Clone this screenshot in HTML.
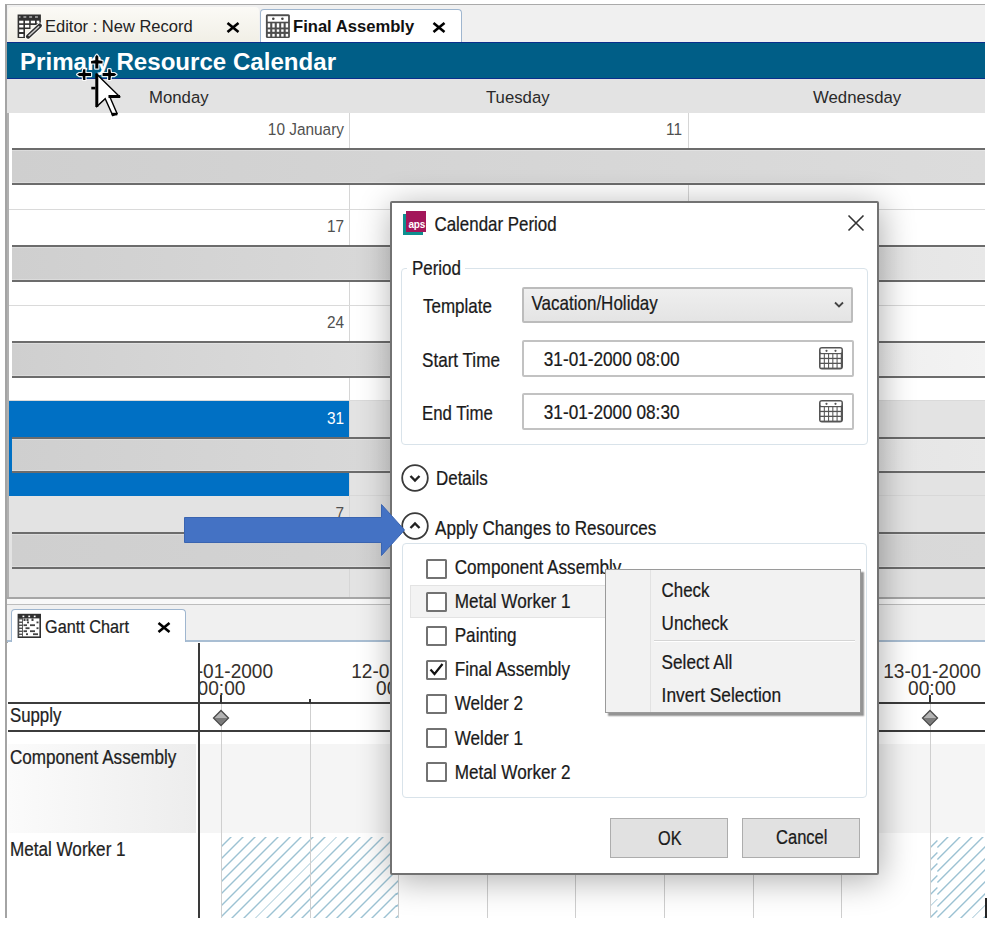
<!DOCTYPE html>
<html><head><meta charset="utf-8">
<style>
html,body{margin:0;padding:0;background:#fff;width:988px;height:926px;overflow:hidden;position:relative;font-family:"Liberation Sans",sans-serif;color:#1e1e1e}
div,span,svg{position:absolute;box-sizing:border-box}
.t{white-space:nowrap;line-height:1}
.sy{transform-origin:0 84.67%;transform:scaleY(1.15);-webkit-text-stroke:0.2px currentColor}
</style></head><body>
<div style="left:5px;top:4px;width:980px;height:914px;border-left:3px solid #a4a4a4;border-top:1px solid #aaa;background:#fff"></div>
<div style="left:7px;top:5px;width:978px;height:37px;background:#f0f0f0"></div>
<div style="left:8px;top:7px;width:251px;height:35px;background:linear-gradient(#fbfaf6,#f1efe6);border-radius:4px 4px 0 0"></div>
<div style="left:260px;top:9px;width:202px;height:34px;background:#fff;border:1px solid #9fb6cf;border-bottom:none;border-radius:4px 4px 0 0"></div>
<svg style="left:14px;top:10px" width="30" height="30" viewBox="14 10 30 30">
 <path d="M17.6 14.4H40.9V23.3L39 24.9H30.5V29.1H25V37.9H17.6Z" fill="#303030"/>
 <g fill="#a8a8a8"><rect x="18.9" y="16.2" width="1.6" height="1.6"/><rect x="23.4" y="16.2" width="2.9" height="1.6"/><rect x="29.2" y="16.2" width="2.9" height="1.6"/><rect x="35" y="16.2" width="2.9" height="1.6"/></g>
 <g fill="#fff"><rect x="19.2" y="20.7" width="4.2" height="2.6"/><rect x="25" y="20.7" width="4.2" height="2.6"/><rect x="30.8" y="20.7" width="4.2" height="2.6"/><rect x="36.7" y="20.7" width="2.6" height="2.6"/>
 <rect x="19.2" y="24.9" width="4.2" height="2.6"/><rect x="25" y="24.9" width="4.2" height="2.6"/><rect x="19.2" y="29.4" width="4.2" height="2.6"/><rect x="19.2" y="34" width="4.2" height="2.9"/></g>
 <path d="M28 36.6L39.8 25.6" stroke="#fff" stroke-width="6" stroke-linecap="round"/>
 <path d="M28 36.6L39.8 25.6" stroke="#303030" stroke-width="4.2" stroke-linecap="round"/>
 <path d="M28.6 36L39.2 26.2" stroke="#cfcfcf" stroke-width="1.5"/>
</svg>
<span class="t" style="left:45px;top:18px;font-size:16.5px;color:#222">Editor : New Record</span>
<svg style="left:226px;top:22px" width="14" height="11" viewBox="0 0 14 11"><path d="M1.5 1l11 9M12.5 1l-11 9" stroke="#000" stroke-width="2.6"/></svg>
<svg style="left:262px;top:10px" width="30" height="30" viewBox="262 10 30 30">
 <rect x="265.9" y="14.2" width="24" height="23.7" rx="1.5" fill="#4e4e4e"/>
 <rect x="267.7" y="16.2" width="20.4" height="5.5" fill="#fff"/>
 <circle cx="273.3" cy="18.8" r="1.3" fill="#444"/><circle cx="282.4" cy="18.8" r="1.3" fill="#444"/>
 <g fill="#fff">
 <rect x="267.8" y="23.3" width="2.4" height="4.2"/><rect x="272.3" y="23.3" width="2.4" height="4.2"/><rect x="276.8" y="23.3" width="2.4" height="4.2"/><rect x="281.2" y="23.3" width="2.4" height="4.2"/><rect x="285.7" y="23.3" width="2.4" height="4.2"/>
 <rect x="267.8" y="29.4" width="2.4" height="2.4"/><rect x="272.3" y="29.4" width="2.4" height="2.4"/><rect x="276.8" y="29.4" width="2.4" height="2.4"/><rect x="281.2" y="29.4" width="2.4" height="2.4"/><rect x="285.7" y="29.4" width="2.4" height="2.4"/>
 <rect x="267.8" y="33.9" width="2.4" height="2.7"/><rect x="272.3" y="33.9" width="2.4" height="2.7"/><rect x="276.8" y="33.9" width="2.4" height="2.7"/><rect x="281.2" y="33.9" width="2.4" height="2.7"/><rect x="285.7" y="33.9" width="2.4" height="2.7"/>
 </g>
</svg>
<span class="t" style="left:293px;top:19px;font-size:16.6px;font-weight:bold;color:#111">Final Assembly</span>
<svg style="left:432px;top:22px" width="14" height="11" viewBox="0 0 14 11"><path d="M1.5 1l11 9M12.5 1l-11 9" stroke="#000" stroke-width="2.6"/></svg>
<div style="left:7px;top:42px;width:978px;height:37px;background:#005e87;border-top:1px solid #0a2f8c;border-bottom:1px solid #0a2f8c"></div>
<span class="t" style="left:20px;top:50px;font-size:24.1px;font-weight:bold;color:#fff">Primary Resource Calendar</span>
<div style="left:7px;top:79px;width:978px;height:34px;background:#e3e3e3"></div>
<span class="t" style="left:149px;top:90px;font-size:16.75px;color:#2a2a2a">Monday</span>
<span class="t" style="left:486px;top:90px;font-size:16.75px;color:#2a2a2a">Tuesday</span>
<span class="t" style="left:813px;top:90px;font-size:16.75px;color:#2a2a2a">Wednesday</span>
<div style="left:7px;top:113px;width:978px;height:484px;background:#fff"></div>
<div style="left:349px;top:401px;width:636px;height:196px;background:#e3e3e3"></div>
<div style="left:8px;top:496px;width:341px;height:101px;background:#e3e3e3"></div>
<div style="left:8px;top:401px;width:341px;height:95px;background:#0070c4"></div>
<div style="left:349px;top:113px;width:1px;height:484px;background:#d6d6d6"></div>
<div style="left:688px;top:113px;width:1px;height:484px;background:#d6d6d6"></div>
<div style="left:12px;top:148px;width:973px;height:2px;background:#6c6c6c"></div>
<div style="left:12px;top:150px;width:973px;height:33px;background:linear-gradient(90deg,#cfcfcf,#dcdcdc)"></div>
<div style="left:12px;top:150px;width:973px;height:1px;background:rgba(255,255,255,0.25)"></div>
<div style="left:12px;top:182px;width:973px;height:1px;background:rgba(255,255,255,0.25)"></div>
<div style="left:12px;top:183px;width:973px;height:2px;background:#6c6c6c"></div>
<div style="left:8px;top:209px;width:977px;height:1px;background:#dadada"></div>
<div style="left:12px;top:245px;width:973px;height:2px;background:#6c6c6c"></div>
<div style="left:12px;top:247px;width:973px;height:33px;background:linear-gradient(90deg,#cfcfcf,#e8e8e8)"></div>
<div style="left:12px;top:247px;width:973px;height:1px;background:rgba(255,255,255,0.25)"></div>
<div style="left:12px;top:279px;width:973px;height:1px;background:rgba(255,255,255,0.25)"></div>
<div style="left:12px;top:280px;width:973px;height:2px;background:#6c6c6c"></div>
<div style="left:8px;top:305px;width:977px;height:1px;background:#dadada"></div>
<div style="left:12px;top:341px;width:973px;height:2px;background:#6c6c6c"></div>
<div style="left:12px;top:343px;width:973px;height:33px;background:linear-gradient(90deg,#cfcfcf,#f3f3f3)"></div>
<div style="left:12px;top:343px;width:973px;height:1px;background:rgba(255,255,255,0.25)"></div>
<div style="left:12px;top:375px;width:973px;height:1px;background:rgba(255,255,255,0.25)"></div>
<div style="left:12px;top:376px;width:973px;height:2px;background:#6c6c6c"></div>
<div style="left:8px;top:400px;width:977px;height:1px;background:#dadada"></div>
<div style="left:12px;top:437px;width:973px;height:2px;background:#6c6c6c"></div>
<div style="left:12px;top:439px;width:973px;height:32px;background:linear-gradient(90deg,#cfcfcf,#e8e8e8)"></div>
<div style="left:12px;top:439px;width:973px;height:1px;background:rgba(255,255,255,0.25)"></div>
<div style="left:12px;top:470px;width:973px;height:1px;background:rgba(255,255,255,0.25)"></div>
<div style="left:12px;top:471px;width:973px;height:2px;background:#6c6c6c"></div>
<div style="left:12px;top:532px;width:973px;height:2px;background:#6c6c6c"></div>
<div style="left:12px;top:534px;width:973px;height:33px;background:linear-gradient(90deg,#cfcfcf,#d9d9d9)"></div>
<div style="left:12px;top:534px;width:973px;height:1px;background:rgba(255,255,255,0.25)"></div>
<div style="left:12px;top:566px;width:973px;height:1px;background:rgba(255,255,255,0.25)"></div>
<div style="left:12px;top:567px;width:973px;height:2px;background:#6c6c6c"></div>
<div style="left:349px;top:495px;width:636px;height:1px;background:#d8d8d8"></div>
<span class="t" style="left:144px;width:200px;top:122px;font-size:15.4px;color:#505050;text-align:right;transform-origin:0 84.67%;transform:scaleY(1.13)">10 January</span>
<span class="t" style="left:482px;width:200px;top:122px;font-size:15.4px;color:#505050;text-align:right;transform-origin:0 84.67%;transform:scaleY(1.13)">11</span>
<span class="t" style="left:144px;width:200px;top:219px;font-size:15.4px;color:#505050;text-align:right;transform-origin:0 84.67%;transform:scaleY(1.13)">17</span>
<span class="t" style="left:144px;width:200px;top:315px;font-size:15.4px;color:#505050;text-align:right;transform-origin:0 84.67%;transform:scaleY(1.13)">24</span>
<span class="t" style="left:144px;width:200px;top:411px;font-size:15.4px;color:#fff;text-align:right;transform-origin:0 84.67%;transform:scaleY(1.13)">31</span>
<span class="t" style="left:144px;width:200px;top:506px;font-size:15.4px;color:#505050;text-align:right;transform-origin:0 84.67%;transform:scaleY(1.13)">7</span>
<div style="left:7px;top:113px;width:2px;height:484px;background:#b0b0b0"></div>
<div style="left:7px;top:597px;width:978px;height:2px;background:#a6a6a6"></div>
<div style="left:7px;top:599px;width:978px;height:5px;background:#f8f8f8"></div>
<div style="left:7px;top:604px;width:978px;height:1px;background:#bdbdbd"></div>
<div style="left:7px;top:605px;width:978px;height:35px;background:#f0f0f0"></div>
<div style="left:7px;top:640px;width:978px;height:2px;background:#a9bed3"></div>
<div style="left:11px;top:609px;width:175px;height:33px;background:#fff;border:1px solid #9fb6cf;border-bottom:none;border-radius:4px 4px 0 0"></div>
<div style="left:7px;top:643px;width:978px;height:275px;background:#fff"></div>
<div style="left:8px;top:744px;width:188px;height:89px;background:linear-gradient(90deg,#fbfbfb,#ededed)"></div>
<div style="left:200px;top:744px;width:785px;height:89px;background:#f5f5f5"></div>
<div style="left:222px;top:837px;width:176px;height:81px;background:repeating-linear-gradient(135deg, #fff 0px, #fff 6.9px, #9cc2d3 6.9px, #9cc2d3 8.27px);background-position:-1.5px 0"></div>
<div style="left:931px;top:837px;width:54px;height:81px;background:repeating-linear-gradient(135deg, #fff 0px, #fff 6.9px, #9cc2d3 6.9px, #9cc2d3 8.27px);background-position:6.4px 0"></div>
<div style="left:221px;top:703px;width:1px;height:215px;background:#cfcfcf"></div>
<div style="left:310px;top:703px;width:1px;height:215px;background:#cfcfcf"></div>
<div style="left:398px;top:703px;width:1px;height:215px;background:#cfcfcf"></div>
<div style="left:487px;top:703px;width:1px;height:215px;background:#cfcfcf"></div>
<div style="left:575px;top:703px;width:1px;height:215px;background:#cfcfcf"></div>
<div style="left:664px;top:703px;width:1px;height:215px;background:#cfcfcf"></div>
<div style="left:753px;top:703px;width:1px;height:215px;background:#cfcfcf"></div>
<div style="left:841px;top:703px;width:1px;height:215px;background:#cfcfcf"></div>
<div style="left:930px;top:703px;width:1px;height:215px;background:#cfcfcf"></div>
<div style="left:8px;top:702px;width:977px;height:2px;background:#3c3c3c"></div>
<div style="left:8px;top:730px;width:977px;height:2px;background:#3c3c3c"></div>
<div style="left:198px;top:643px;width:2px;height:275px;background:#3a3a3a"></div>
<div style="left:200px;top:643px;width:785px;height:60px;overflow:hidden">
<span class="t" style="left:-35px;width:120px;top:18.5px;font-size:19.1px;transform-origin:0 84.67%;transform:scaleY(1.06);color:#36312c;text-align:center">11-01-2000</span>
<span class="t" style="left:-38.5px;width:120px;top:36px;font-size:19.1px;transform-origin:0 84.67%;transform:scaleY(1.06);color:#36312c;text-align:center">00:00</span>
<span class="t" style="left:140px;width:120px;top:18.5px;font-size:19.1px;transform-origin:0 84.67%;transform:scaleY(1.06);color:#36312c;text-align:center">12-01-2000</span>
<span class="t" style="left:140px;width:120px;top:36px;font-size:19.1px;transform-origin:0 84.67%;transform:scaleY(1.06);color:#36312c;text-align:center">00:00</span>
<span class="t" style="left:672px;width:120px;top:18.5px;font-size:19.1px;transform-origin:0 84.67%;transform:scaleY(1.06);color:#36312c;text-align:center">13-01-2000</span>
<span class="t" style="left:672px;width:120px;top:36px;font-size:19.1px;transform-origin:0 84.67%;transform:scaleY(1.06);color:#36312c;text-align:center">00:00</span>
</div>
<div style="left:220px;top:695px;width:2px;height:8px;background:#333"></div>
<div style="left:929px;top:695px;width:2px;height:8px;background:#333"></div>
<div style="left:309px;top:699px;width:2px;height:4px;background:#333"></div>
<svg style="left:212px;top:709px" width="18" height="18" viewBox="0 0 18 18"><path d="M9 1.5L16.5 9 9 16.5 1.5 9z" fill="#8c8c8c" stroke="#4a4a4a" stroke-width="1.3"/><path d="M9 2.8L15.2 9H2.8z" fill="#b4b4b4"/><path d="M9 15.2L15.2 9H2.8z" fill="#7a7a7a"/></svg>
<svg style="left:921px;top:709px" width="18" height="18" viewBox="0 0 18 18"><path d="M9 1.5L16.5 9 9 16.5 1.5 9z" fill="#8c8c8c" stroke="#4a4a4a" stroke-width="1.3"/><path d="M9 2.8L15.2 9H2.8z" fill="#b4b4b4"/><path d="M9 15.2L15.2 9H2.8z" fill="#7a7a7a"/></svg>
<span class="t sy" style="left:10px;top:709px;font-size:16.8px;color:#222">Supply</span>
<span class="t sy" style="left:10px;top:750px;font-size:17.1px;color:#222">Component Assembly</span>
<span class="t sy" style="left:10px;top:841.5px;font-size:17.1px;color:#222">Metal Worker 1</span>
<svg style="left:14px;top:610px" width="30" height="30" viewBox="14 610 30 30">
 <rect x="18.4" y="614.6" width="21.8" height="22.6" fill="#fff" stroke="#303030" stroke-width="1.6"/>
 <rect x="18" y="614.2" width="22.6" height="4.2" fill="#303030"/>
 <g fill="#fff"><rect x="22.5" y="615.6" width="1.8" height="1.6"/><rect x="28.3" y="615.6" width="1.8" height="1.6"/><rect x="33.8" y="615.6" width="1.8" height="1.6"/></g>
 <rect x="18.4" y="618" width="4.6" height="19" fill="#555"/>
 <g fill="#fff"><rect x="19.3" y="619.5" width="2.8" height="2"/><rect x="19.3" y="623" width="2.8" height="1.6"/><rect x="19.3" y="626" width="2.8" height="1.6"/><rect x="19.3" y="629" width="2.8" height="1.6"/><rect x="19.3" y="632" width="2.8" height="1.6"/><rect x="19.3" y="635" width="2.8" height="1.3"/></g>
 <g fill="#444"><rect x="23.5" y="618.5" width="2" height="2.5"/><rect x="26.5" y="618.5" width="2" height="2.5"/><rect x="31.5" y="618.5" width="2" height="2.5"/><rect x="27" y="621.5" width="2" height="1.8"/><rect x="36.5" y="621.5" width="2" height="1.8"/>
 <rect x="23.5" y="624.3" width="3.5" height="1.8"/><rect x="30" y="624.3" width="5" height="1.8"/><rect x="25.5" y="627.3" width="4" height="1.8"/><rect x="36.5" y="627.3" width="2" height="1.8"/>
 <rect x="23.5" y="630.3" width="3.5" height="1.8"/><rect x="30" y="630.3" width="5" height="1.8"/><rect x="26" y="633.3" width="2" height="1.8"/><rect x="33" y="633.3" width="5" height="1.8"/></g>
</svg>
<span class="t sy" style="left:45px;top:619px;font-size:16.25px;color:#222;transform:scaleY(1.12)">Gantt Chart</span>
<svg style="left:157px;top:622px" width="14" height="11" viewBox="0 0 14 11"><path d="M1.5 1l11 9M12.5 1l-11 9" stroke="#000" stroke-width="2.6"/></svg>
<div style="left:985px;top:898px;width:2px;height:20px;background:#262626"></div>
<div style="left:390px;top:201px;width:489px;height:674px;background:#fff;border:2px solid #727272;border-radius:2px;box-shadow:2px 5px 34px rgba(0,0,0,0.33)"></div>
<div style="left:403px;top:214px;width:20px;height:21px;background:#0f8f8f"></div>
<div style="left:406px;top:211px;width:20px;height:21px;background:#a3165a"></div>
<span class="t" style="left:408.5px;top:219.5px;font-size:10px;font-weight:bold;color:#fff;letter-spacing:-0.2px">aps</span>
<span class="t sy" style="left:434.5px;top:218.29px;font-size:16.9px;color:#1a1a1a;">Calendar Period</span>
<svg style="left:846px;top:213px" width="20" height="20" viewBox="0 0 20 20"><path d="M2.5 2.5l15 15M17.5 2.5l-15 15" stroke="#333" stroke-width="1.6"/></svg>
<div style="left:401px;top:268px;width:467px;height:177px;border:1px solid #d9e3ea;border-radius:4px"></div>
<div style="left:407px;top:258px;width:58px;height:20px;background:#fff"></div>
<span class="t sy" style="left:412px;top:261.95px;font-size:16.95px;color:#1a1a1a;">Period</span>
<span class="t sy" style="left:423px;top:299.41px;font-size:17.0px;color:#1a1a1a;">Template</span>
<span class="t sy" style="left:422px;top:352.72px;font-size:17.1px;color:#1a1a1a;">Start Time</span>
<span class="t sy" style="left:422px;top:406.98px;font-size:16.8px;color:#1a1a1a;">End Time</span>
<div style="left:522px;top:287px;width:331px;height:36px;background:linear-gradient(#efefef,#e4e4e4);border:2px solid #bcbcbc;border-radius:2px"></div>
<span class="t sy" style="left:531.5px;top:296.31px;font-size:17.0px;color:#1a1a1a;">Vacation/Holiday</span>
<svg style="left:833px;top:300px" width="12" height="9" viewBox="0 0 12 9"><path d="M2 2.5l4 4 4-4" fill="none" stroke="#444" stroke-width="1.8"/></svg>
<div style="left:522px;top:340px;width:332px;height:37px;background:#fff;border:2px solid #c2c2c2;border-radius:2px"></div>
<span class="t sy" style="left:543.8px;top:352.14px;font-size:17.2px;color:#1a1a1a;">31-01-2000 08:00</span>
<svg style="left:818px;top:346px" width="26" height="24" viewBox="0 0 26 24"><rect x="1" y="1" width="24" height="22.5" rx="3" fill="#555"/><rect x="2.6" y="2.6" width="20.8" height="4.4" rx="1" fill="#fff"/><circle cx="8.5" cy="4.8" r="1.1" fill="#555"/><circle cx="17.5" cy="4.8" r="1.1" fill="#555"/><rect x="2.60" y="8.20" width="3.2" height="3.6" fill="#fff"/><rect x="6.85" y="8.20" width="3.2" height="3.6" fill="#fff"/><rect x="11.10" y="8.20" width="3.2" height="3.6" fill="#fff"/><rect x="15.35" y="8.20" width="3.2" height="3.6" fill="#fff"/><rect x="19.60" y="8.20" width="3.2" height="3.6" fill="#fff"/><rect x="2.60" y="13.10" width="3.2" height="3.6" fill="#fff"/><rect x="6.85" y="13.10" width="3.2" height="3.6" fill="#fff"/><rect x="11.10" y="13.10" width="3.2" height="3.6" fill="#fff"/><rect x="15.35" y="13.10" width="3.2" height="3.6" fill="#fff"/><rect x="19.60" y="13.10" width="3.2" height="3.6" fill="#fff"/><rect x="2.60" y="18.00" width="3.2" height="3.6" fill="#fff"/><rect x="6.85" y="18.00" width="3.2" height="3.6" fill="#fff"/><rect x="11.10" y="18.00" width="3.2" height="3.6" fill="#fff"/><rect x="15.35" y="18.00" width="3.2" height="3.6" fill="#fff"/><rect x="19.60" y="18.00" width="3.2" height="3.6" fill="#fff"/></svg>
<div style="left:522px;top:393px;width:332px;height:37px;background:#fff;border:2px solid #c2c2c2;border-radius:2px"></div>
<span class="t sy" style="left:543.8px;top:405.14px;font-size:17.2px;color:#1a1a1a;">31-01-2000 08:30</span>
<svg style="left:818px;top:399px" width="26" height="24" viewBox="0 0 26 24"><rect x="1" y="1" width="24" height="22.5" rx="3" fill="#555"/><rect x="2.6" y="2.6" width="20.8" height="4.4" rx="1" fill="#fff"/><circle cx="8.5" cy="4.8" r="1.1" fill="#555"/><circle cx="17.5" cy="4.8" r="1.1" fill="#555"/><rect x="2.60" y="8.20" width="3.2" height="3.6" fill="#fff"/><rect x="6.85" y="8.20" width="3.2" height="3.6" fill="#fff"/><rect x="11.10" y="8.20" width="3.2" height="3.6" fill="#fff"/><rect x="15.35" y="8.20" width="3.2" height="3.6" fill="#fff"/><rect x="19.60" y="8.20" width="3.2" height="3.6" fill="#fff"/><rect x="2.60" y="13.10" width="3.2" height="3.6" fill="#fff"/><rect x="6.85" y="13.10" width="3.2" height="3.6" fill="#fff"/><rect x="11.10" y="13.10" width="3.2" height="3.6" fill="#fff"/><rect x="15.35" y="13.10" width="3.2" height="3.6" fill="#fff"/><rect x="19.60" y="13.10" width="3.2" height="3.6" fill="#fff"/><rect x="2.60" y="18.00" width="3.2" height="3.6" fill="#fff"/><rect x="6.85" y="18.00" width="3.2" height="3.6" fill="#fff"/><rect x="11.10" y="18.00" width="3.2" height="3.6" fill="#fff"/><rect x="15.35" y="18.00" width="3.2" height="3.6" fill="#fff"/><rect x="19.60" y="18.00" width="3.2" height="3.6" fill="#fff"/></svg>
<svg style="left:401px;top:464.4px" width="28" height="28" viewBox="0 0 28 28"><circle cx="14" cy="14" r="12.8" fill="none" stroke="#3a3a3a" stroke-width="1.8"/><path d="M9.5 12l4.5 4.5 4.5-4.5" fill="none" stroke="#222" stroke-width="2.4"/></svg>
<svg style="left:401px;top:512px" width="28" height="28" viewBox="0 0 28 28"><circle cx="14" cy="14" r="12.8" fill="none" stroke="#3a3a3a" stroke-width="1.8"/><path d="M9.5 16l4.5-4.5 4.5 4.5" fill="none" stroke="#222" stroke-width="2.4"/></svg>
<span class="t sy" style="left:436px;top:472.45px;font-size:16.95px;color:#1a1a1a;">Details</span>
<span class="t sy" style="left:435px;top:521.12px;font-size:17.1px;color:#1a1a1a;">Apply Changes to Resources</span>
<div style="left:402px;top:543px;width:465px;height:255px;border:1px solid #d9e3ea;border-radius:4px"></div>
<div style="left:410px;top:585px;width:200px;height:33px;background:#f3f3f3;border:1px solid #e3e3e3"></div>
<div style="left:426px;top:558.5px;width:21px;height:20px;background:#fff;border:2px solid #727272;border-radius:1.5px"></div>
<span class="t sy" style="left:454.7px;top:560.28px;font-size:17.15px;color:#1a1a1a;">Component Assembly</span>
<div style="left:426px;top:592.4px;width:21px;height:20px;background:#fff;border:2px solid #727272;border-radius:1.5px"></div>
<span class="t sy" style="left:454.7px;top:594.33px;font-size:17.15px;color:#1a1a1a;">Metal Worker 1</span>
<div style="left:426px;top:626.3px;width:21px;height:20px;background:#fff;border:2px solid #727272;border-radius:1.5px"></div>
<span class="t sy" style="left:454.7px;top:628.38px;font-size:17.15px;color:#1a1a1a;">Painting</span>
<div style="left:426px;top:660.2px;width:21px;height:20px;background:#fff;border:2px solid #727272;border-radius:1.5px"></div>
<svg style="left:428px;top:662.2px" width="17" height="15" viewBox="0 0 17 15"><path d="M2.5 7.5l4 4.5 8-10" fill="none" stroke="#111" stroke-width="2.2"/></svg>
<span class="t sy" style="left:454.7px;top:662.43px;font-size:17.15px;color:#1a1a1a;">Final Assembly</span>
<div style="left:426px;top:694.1px;width:21px;height:20px;background:#fff;border:2px solid #727272;border-radius:1.5px"></div>
<span class="t sy" style="left:454.7px;top:696.48px;font-size:17.15px;color:#1a1a1a;">Welder 2</span>
<div style="left:426px;top:728.0px;width:21px;height:20px;background:#fff;border:2px solid #727272;border-radius:1.5px"></div>
<span class="t sy" style="left:454.7px;top:730.53px;font-size:17.15px;color:#1a1a1a;">Welder 1</span>
<div style="left:426px;top:761.9px;width:21px;height:20px;background:#fff;border:2px solid #727272;border-radius:1.5px"></div>
<span class="t sy" style="left:454.7px;top:764.58px;font-size:17.15px;color:#1a1a1a;">Metal Worker 2</span>
<div style="left:605px;top:569px;width:256px;height:144px;background:#f2f2f2;border:1px solid #9a9a9a;box-shadow:3px 3px 1.5px rgba(0,0,0,0.42)"></div>
<div style="left:650px;top:570px;width:1px;height:142px;background:#e2e2e2"></div>
<div style="left:654px;top:640px;width:201px;height:1px;background:#d5d5d5"></div>
<div style="left:654px;top:641px;width:201px;height:1px;background:#fff"></div>
<span class="t sy" style="left:661.6px;top:584.29px;font-size:16.9px;color:#1a1a1a;">Check</span>
<span class="t sy" style="left:661.6px;top:615.85px;font-size:17.07px;color:#1a1a1a;">Uncheck</span>
<span class="t sy" style="left:661.6px;top:655.44px;font-size:17.2px;color:#1a1a1a;">Select All</span>
<span class="t sy" style="left:661.6px;top:687.71px;font-size:17.35px;color:#1a1a1a;">Invert Selection</span>
<div style="left:610px;top:818px;width:118px;height:40px;background:#e1e1e1;border:1px solid #adadad"></div>
<span class="t sy" style="left:658px;top:831.40px;font-size:16.3px;color:#1a1a1a;transform:scaleY(1.22)">OK</span>
<div style="left:742px;top:818px;width:118px;height:40px;background:#e1e1e1;border:1px solid #adadad"></div>
<span class="t sy" style="left:776px;top:831.20px;font-size:16.54px;color:#1a1a1a;transform:scaleY(1.22)">Cancel</span>
<svg style="left:182px;top:502px" width="226" height="56" viewBox="0 0 226 56"><path d="M2.5 15.5h197V2.5l23 25.5-23 25.5V40.5H2.5z" fill="#4472c4" stroke="#3a64b0" stroke-width="1"/></svg>
<svg style="left:70px;top:48px" width="56" height="72" viewBox="70 48 56 72">
<g stroke="#fff" stroke-width="2.4" stroke-linejoin="round" fill="#fff" opacity="0.9">
 <path d="M95.3 56.8L96.8 54.8L98.3 56.8V60.3L102.5 61V63.4H98.3V68.6H95.3V63.4H91.1V61L95.3 60.3Z"/><path d="M79.3 73.1L77.2 74.6L79.3 76.1H82.6L83.2 79.9H85.4V76.1H91V73.1H85.4V69.3H83.2L82.6 73.1Z"/><path d="M114.3 73.1L116.4 74.6L114.3 76.1H111L110.4 79.9H108.2V76.1H102.6V73.1H108.2V69.3H110.4L111 73.1Z"/>
</g>
<g fill="#000">
 <path d="M95.3 56.8L96.8 54.8L98.3 56.8V60.3L102.5 61V63.4H98.3V68.6H95.3V63.4H91.1V61L95.3 60.3Z"/><path d="M79.3 73.1L77.2 74.6L79.3 76.1H82.6L83.2 79.9H85.4V76.1H91V73.1H85.4V69.3H83.2L82.6 73.1Z"/><path d="M114.3 73.1L116.4 74.6L114.3 76.1H111L110.4 79.9H108.2V76.1H102.6V73.1H108.2V69.3H110.4L111 73.1Z"/>
 <rect x="91.3" y="86.8" width="4" height="2.6"/>
</g>
<path d="M97 74.5L119.5 96.5h-9.8l7.4 17.2-4.3 1.8-7.6-16.8-8.2 7.6z" fill="#fff" stroke="#000" stroke-width="1.4" stroke-linejoin="miter"/>
<rect x="95.3" y="73.5" width="3" height="33.5" fill="#000"/>
<rect x="108.5" y="95" width="11.5" height="3" fill="#000"/>
<rect x="111.5" y="112.8" width="5.8" height="2.6" fill="#000"/>
</svg>
</body></html>
